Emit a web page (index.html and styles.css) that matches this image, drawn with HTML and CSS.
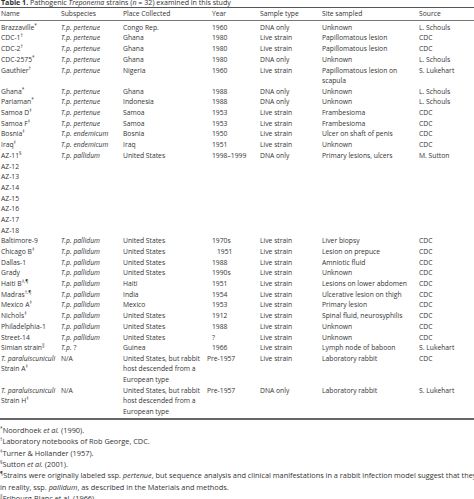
FILE: index.html
```html
<!DOCTYPE html>
<html>
<head>
<meta charset="utf-8">
<link rel="stylesheet" href="styles.css">
</head>
<body>
<div class="caption"><b>Table 1.</b> Pathogenic <i>Treponema</i> strains (<i>n</i> = 32) examined in this study</div>
<table class="tbl">
<colgroup>
<col class="c-name"><col class="c-sub"><col class="c-place"><col class="c-year"><col class="c-type"><col class="c-site"><col class="c-src">
</colgroup>
<thead>
<tr><th>Name</th><th>Subspecies</th><th>Place Collected</th><th>Year</th><th>Sample type</th><th>Site sampled</th><th>Source</th></tr>
</thead>
<tbody>
<tr class="first"><td>Brazzaville<sup class="fn">*</sup></td><td><i>T.p. pertenue</i></td><td>Congo Rep.</td><td>1960</td><td>DNA only</td><td>Unknown</td><td>L. Schouls</td></tr>
<tr><td>CDC-1<sup class="fn">†</sup></td><td><i>T.p. pertenue</i></td><td>Ghana</td><td>1980</td><td>Live strain</td><td>Papillomatous lesion</td><td>CDC</td></tr>
<tr><td>CDC-2<sup class="fn">†</sup></td><td><i>T.p. pertenue</i></td><td>Ghana</td><td>1980</td><td>Live strain</td><td>Papillomatous lesion</td><td>CDC</td></tr>
<tr><td>CDC-2575<sup class="fn">*</sup></td><td><i>T.p. pertenue</i></td><td>Ghana</td><td>1980</td><td>DNA only</td><td>Unknown</td><td>L. Schouls</td></tr>
<tr><td>Gauthier<sup class="fn">†</sup></td><td><i>T.p. pertenue</i></td><td>Nigeria</td><td>1960</td><td>Live strain</td><td>Papillomatous lesion on<br>scapula</td><td>S. Lukehart</td></tr>
<tr><td>Ghana<sup class="fn">*</sup></td><td><i>T.p. pertenue</i></td><td>Ghana</td><td>1988</td><td>DNA only</td><td>Unknown</td><td>L. Schouls</td></tr>
<tr><td>Pariaman<sup class="fn">*</sup></td><td><i>T.p. pertenue</i></td><td>Indonesia</td><td>1988</td><td>DNA only</td><td>Unknown</td><td>L. Schouls</td></tr>
<tr><td>Samoa D<sup class="fn">‡</sup></td><td><i>T.p. pertenue</i></td><td>Samoa</td><td>1953</td><td>Live strain</td><td>Frambesioma</td><td>CDC</td></tr>
<tr><td>Samoa F<sup class="fn">‡</sup></td><td><i>T.p. pertenue</i></td><td>Samoa</td><td>1953</td><td>Live strain</td><td>Frambesioma</td><td>CDC</td></tr>
<tr><td>Bosnia<sup class="fn">‡</sup></td><td><i>T.p. endemicum</i></td><td>Bosnia</td><td>1950</td><td>Live strain</td><td>Ulcer on shaft of penis</td><td>CDC</td></tr>
<tr><td>Iraq<sup class="fn">‡</sup></td><td><i>T.p. endemicum</i></td><td>Iraq</td><td>1951</td><td>Live strain</td><td>Unknown</td><td>CDC</td></tr>
<tr><td>AZ-11<sup class="fn">§</sup></td><td><i>T.p. pallidum</i></td><td>United States</td><td>1998–1999</td><td>DNA only</td><td>Primary lesions, ulcers</td><td>M. Sutton</td></tr>
<tr><td>AZ-12</td><td></td><td></td><td></td><td></td><td></td><td></td></tr>
<tr><td>AZ-13</td><td></td><td></td><td></td><td></td><td></td><td></td></tr>
<tr><td>AZ-14</td><td></td><td></td><td></td><td></td><td></td><td></td></tr>
<tr><td>AZ-15</td><td></td><td></td><td></td><td></td><td></td><td></td></tr>
<tr><td>AZ-16</td><td></td><td></td><td></td><td></td><td></td><td></td></tr>
<tr><td>AZ-17</td><td></td><td></td><td></td><td></td><td></td><td></td></tr>
<tr><td>AZ-18</td><td></td><td></td><td></td><td></td><td></td><td></td></tr>
<tr><td>Baltimore-9</td><td><i>T.p. pallidum</i></td><td>United States</td><td>1970s</td><td>Live strain</td><td>Liver biopsy</td><td>CDC</td></tr>
<tr><td>Chicago B<sup class="fn">‡</sup></td><td><i>T.p. pallidum</i></td><td>United States</td><td class="nudge">1951</td><td>Live strain</td><td>Lesion on prepuce</td><td>CDC</td></tr>
<tr><td>Dallas-1</td><td><i>T.p. pallidum</i></td><td>United States</td><td>1988</td><td>Live strain</td><td>Amniotic fluid</td><td>CDC</td></tr>
<tr><td>Grady</td><td><i>T.p. pallidum</i></td><td>United States</td><td>1990s</td><td>Live strain</td><td>Unknown</td><td>CDC</td></tr>
<tr><td>Haiti B<sup class="fn">‡,¶</sup></td><td><i>T.p. pallidum</i></td><td>Haiti</td><td>1951</td><td>Live strain</td><td>Lesions on lower abdomen</td><td>CDC</td></tr>
<tr><td>Madras<sup class="fn">†,¶</sup></td><td><i>T.p. pallidum</i></td><td>India</td><td>1954</td><td>Live strain</td><td>Ulcerative lesion on thigh</td><td>CDC</td></tr>
<tr><td>Mexico A<sup class="fn">‡</sup></td><td><i>T.p. pallidum</i></td><td>Mexico</td><td>1953</td><td>Live strain</td><td>Primary lesion</td><td>CDC</td></tr>
<tr><td>Nichols<sup class="fn">‡</sup></td><td><i>T.p. pallidum</i></td><td>United States</td><td>1912</td><td>Live strain</td><td>Spinal fluid, neurosyphilis</td><td>CDC</td></tr>
<tr><td>Philadelphia-1</td><td><i>T.p. pallidum</i></td><td>United States</td><td>1988</td><td>Live strain</td><td>Unknown</td><td>CDC</td></tr>
<tr><td>Street-14</td><td><i>T.p. pallidum</i></td><td>United States</td><td>?</td><td>Live strain</td><td>Unknown</td><td>CDC</td></tr>
<tr><td>Simian strain<sup class="fn">‖</sup></td><td><i>T.p.</i> ?</td><td>Guinea</td><td>1966</td><td>Live strain</td><td>Lymph node of baboon</td><td>S. Lukehart</td></tr>
<tr><td><i>T. paraluiscuniculi</i><br>Strain A<sup class="fn">‡</sup></td><td>N/A</td><td>United States, but rabbit<br>host descended from a<br>European type</td><td class="pre">Pre-1957</td><td>Live strain</td><td>Laboratory rabbit</td><td>CDC</td></tr>
<tr class="last"><td><i>T. paraluiscuniculi</i><br>Strain H<sup class="fn">‡</sup></td><td>N/A</td><td>United States, but rabbit<br>host descended from a<br>European type</td><td class="pre">Pre-1957</td><td>DNA only</td><td>Laboratory rabbit</td><td>S. Lukehart</td></tr>
</tbody>
</table>
<div class="notes">
<div class="note"><sup class="fn">*</sup>Noordhoek <i>et al.</i> (1990).</div>
<div class="note"><sup class="fn">†</sup>Laboratory notebooks of Rob George, CDC.</div>
<div class="note"><sup class="fn">‡</sup>Turner &amp; Hollander (1957).</div>
<div class="note"><sup class="fn">§</sup>Sutton <i>et al.</i> (2001).</div>
<div class="note"><sup class="fn">¶</sup>Strains were originally labeled ssp. <i>pertenue</i>, but sequence analysis and clinical manifestations in a rabbit infection model suggest that they are,</div>
<div class="note">in reality, ssp. <i>pallidum</i>, as described in the Materials and methods.</div>
<div class="note"><sup class="fn">‖</sup>Fribourg-Blanc et al. (1966).</div>
</div>
</body>
</html>
```
FILE: styles.css
```css
html, body {
  margin: 0;
  padding: 0;
  background: #fff;
}
body {
  width: 474px;
  height: 499px;
  overflow: hidden;
  font-family: "Open Sans", "Noto Sans", sans-serif;
  font-size: 6.75px;
  color: #333;
}
.caption {
  margin-top: -3px;
  height: 10px;
  line-height: 10px;
  font-size: 7.1px;
  white-space: nowrap;
  padding-left: 1px;
}
.caption b { font-weight: 700; }
.tbl {
  border-collapse: collapse;
  table-layout: fixed;
  width: 474px;
  border-top: 1.5px solid #555;
  border-bottom: 2px solid #666;
}
.c-name { width: 61px; }
.c-sub { width: 62px; }
.c-place { width: 89px; }
.c-year { width: 48px; }
.c-type { width: 62px; }
.c-site { width: 97px; }
.c-src { width: 55px; }
.tbl th, .tbl td {
  padding: 0.1px 0;
  text-align: left;
  vertical-align: top;
  white-space: nowrap;
  line-height: 10.5px;
  font-weight: 400;
  overflow: visible;
}
.tbl th:first-child, .tbl td:first-child { padding-left: 1px; }
.tbl thead th {
  padding-top: 1px;
  padding-bottom: 0.8px;
  border-bottom: 1px solid #777;
}
.tbl tbody tr.first td { padding-top: 1.5px; }
.tbl tbody tr.last td { padding-bottom: 1px; }
.tbl td.nudge { padding-left: 5px; }
.tbl td.pre { position: relative; left: -5px; }
.fn {
  font-size: 4.8px;
  line-height: 0;
  vertical-align: 2.6px;
}
.notes {
  padding-top: 5px;
  white-space: nowrap;
  font-size: 7.35px;
}
.note {
  line-height: 11.3px;
}
```
